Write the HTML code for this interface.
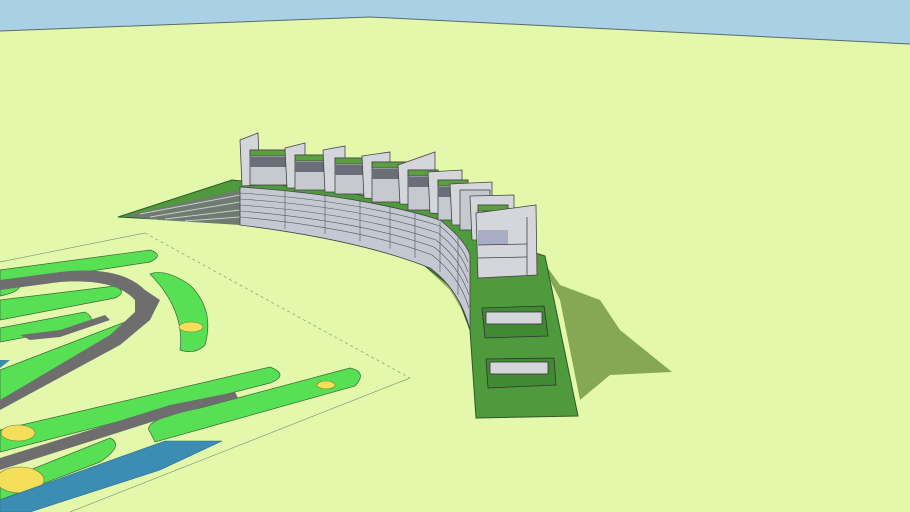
<!DOCTYPE html>
<html><head><style>
html,body{margin:0;padding:0;background:#e4f8ac;overflow:hidden}
svg{display:block}
</style></head><body>
<svg width="910" height="512" viewBox="0 0 910 512" xmlns="http://www.w3.org/2000/svg">
<rect width="910" height="512" fill="#e4f8ac"/>
<polygon points="0,0 910,0 910,44 370,17 0,31" fill="#a9d0e4"/>
<polyline points="0,31 370,17 910,44" fill="none" stroke="#5a6a6a" stroke-width="1"/>
<polyline points="0,262 145,233" stroke="#8a9a7a" stroke-width="0.7" fill="none"/>
<polyline points="145,233 410,378" stroke="#8a9a7a" stroke-width="0.7" stroke-dasharray="3,3" fill="none"/>
<polyline points="410,378 70,512" stroke="#8a9a7a" stroke-width="0.7" fill="none"/>
<polygon points="250,225 330,238 420,262 450,290 468,320 470,250 440,225 330,215" fill="#94b45e"/>
<polygon points="535,250 560,285 600,300 620,330 672,372 610,375 580,400 560,300" fill="#86a855"/>
<polygon points="118,217 232,180 330,190 420,205 470,225 520,248 545,256 578,416 476,418 470,330 455,290 420,262 360,240 300,228 250,224" fill="#4f9a3c" stroke="#2f5a25" stroke-width="1"/>
<polygon points="125,216 240,190 240,225 160,220" fill="#6f7a70"/>
<g stroke="#c8cccc" stroke-width="1">
<line x1="140" y1="214" x2="240" y2="195"/><line x1="150" y1="217" x2="240" y2="202"/>
<line x1="165" y1="219" x2="240" y2="210"/><line x1="185" y1="221" x2="240" y2="217"/>
</g>
<path d="M240,187 Q360,195 440,220 Q465,240 470,255 L470,330 Q460,290 430,268 Q360,240 240,225 Z" fill="#c4c8d2" stroke="#444" stroke-width="0.8"/>
<g stroke="#555" stroke-width="0.6" fill="none">
<path d="M240,193 Q360,201 440,226 Q462,244 468,262"/>
<path d="M240,199 Q360,207 438,233 Q461,251 468,272"/>
<path d="M240,205 Q360,214 436,240 Q460,259 468,283"/>
<path d="M240,211 Q360,221 434,247 Q460,268 469,295"/>
<path d="M240,217 Q360,228 432,255 Q460,277 469,308"/>
<line x1="285" y1="191" x2="285" y2="229"/><line x1="325" y1="194" x2="325" y2="234"/>
<line x1="360" y1="199" x2="360" y2="241"/><line x1="390" y1="205" x2="390" y2="249"/>
<line x1="415" y1="212" x2="415" y2="258"/><line x1="440" y1="222" x2="440" y2="272"/>
<line x1="458" y1="238" x2="458" y2="295"/>
</g>
<g stroke="#444" stroke-width="0.8">
<polygon points="240,140 258,133 260,185 242,186" fill="#d4d6dc"/>
<rect x="250" y="150" width="40" height="35" fill="#c6c9d0"/>
<rect x="250" y="157" width="40" height="10" fill="#6a6e78" stroke="none"/>
<rect x="250" y="150" width="40" height="6" fill="#5aa040"/>
<polygon points="285,148 305,143 305,188 287,188" fill="#d4d6dc"/>
<rect x="295" y="155" width="35" height="35" fill="#c6c9d0"/>
<rect x="295" y="162" width="35" height="10" fill="#6a6e78" stroke="none"/>
<rect x="295" y="155" width="35" height="6" fill="#5aa040"/>
<polygon points="323,150 345,146 345,192 325,192" fill="#d4d6dc"/>
<rect x="335" y="158" width="35" height="36" fill="#c6c9d0"/>
<rect x="335" y="165" width="35" height="10" fill="#6a6e78" stroke="none"/>
<rect x="335" y="158" width="35" height="6" fill="#5aa040"/>
<polygon points="362,156 390,152 390,200 364,198" fill="#d4d6dc"/>
<rect x="372" y="162" width="35" height="40" fill="#c6c9d0"/>
<rect x="372" y="169" width="35" height="10" fill="#6a6e78" stroke="none"/>
<rect x="372" y="162" width="35" height="6" fill="#5aa040"/>
<polygon points="398,165 435,152 435,205 400,204" fill="#d4d6dc"/>
<rect x="408" y="170" width="30" height="40" fill="#c6c9d0"/>
<rect x="408" y="177" width="30" height="10" fill="#6a6e78" stroke="none"/>
<rect x="408" y="170" width="30" height="6" fill="#5aa040"/>
<polygon points="428,172 462,170 462,215 430,213" fill="#d4d6dc"/>
<rect x="438" y="180" width="30" height="40" fill="#c6c9d0"/>
<rect x="438" y="187" width="30" height="10" fill="#6a6e78" stroke="none"/>
<rect x="438" y="180" width="30" height="6" fill="#5aa040"/>
<polygon points="450,184 492,182 492,225 452,225" fill="#d4d6dc"/>
<rect x="460" y="190" width="30" height="40" fill="#c6c9d0"/>
<polygon points="470,196 514,195 514,240 472,240" fill="#d4d6dc"/>
<rect x="478" y="205" width="30" height="35" fill="#c6c9d0"/>
<rect x="478" y="205" width="30" height="6" fill="#5aa040"/>
<polygon points="476,213 536,205 537,275 478,278" fill="#d4d6dc"/>
<rect x="478" y="230" width="30" height="15" fill="#a8acc4" stroke="none"/>
<line x1="478" y1="245" x2="527" y2="244"/><line x1="478" y1="258" x2="527" y2="257"/>
<line x1="527" y1="217" x2="527" y2="275"/>
</g>
<g stroke="#333" stroke-width="0.8">
<polygon points="482,308 544,306 548,336 485,338" fill="#3f8a32"/>
<rect x="486" y="312" width="56" height="12" fill="#d4d6dc"/>
<polygon points="486,359 554,358 556,385 488,388" fill="#3f8a32"/>
<rect x="490" y="362" width="58" height="12" fill="#d4d6dc"/>
</g>
<g stroke="#3a6a3a" stroke-width="0.7" fill="#58e055">
<path d="M0,270 L150,250 Q165,255 150,262 L0,285 Z"/>
<path d="M0,285 L20,285 Q20,292 0,296 Z"/>
<path d="M0,300 L115,286 Q128,292 115,298 L0,320 Z"/>
<path d="M0,328 L85,312 Q98,320 85,326 L0,342 Z"/>
<path d="M0,370 L125,322 Q140,330 125,340 L0,405 Z"/>
<path d="M150,274 Q165,268 190,285 Q215,310 205,345 Q195,355 180,350 Q185,310 150,274 Z"/>
<path d="M0,430 L270,367 Q290,375 270,383 L0,452 Z"/>
<path d="M150,432 Q140,420 200,408 L350,368 Q368,372 355,386 L155,442 Z"/>
<path d="M0,482 L110,438 Q125,445 100,462 L0,500 Z"/>
</g>
<g fill="#6e6e6e">
<path d="M0,280 L60,272 Q120,265 145,290 L160,300 L150,320 L120,345 L0,410 L0,400 L110,335 L135,312 L135,300 Q115,278 60,282 L0,290 Z"/>
<path d="M20,335 L60,330 L105,315 L110,320 L60,337 L30,340 Z"/>
<path d="M0,458 L170,405 L235,392 L238,398 L180,413 L0,470 Z"/>
</g>
<g fill="#f5df5a" stroke="#7a7a3a" stroke-width="0.6">
<ellipse cx="191" cy="327" rx="12" ry="5"/>
<ellipse cx="326" cy="385" rx="9" ry="4"/>
<ellipse cx="18" cy="433" rx="17" ry="8"/>
<ellipse cx="20" cy="480" rx="24" ry="13"/>
</g>
<polygon points="0,360 10,360 0,368" fill="#3a8ab0"/>
<polygon points="0,500 165,441 222,441 160,470 30,512 0,512" fill="#3b8db4" stroke="#2a6a8a" stroke-width="0.6"/>
</svg>
</body></html>
